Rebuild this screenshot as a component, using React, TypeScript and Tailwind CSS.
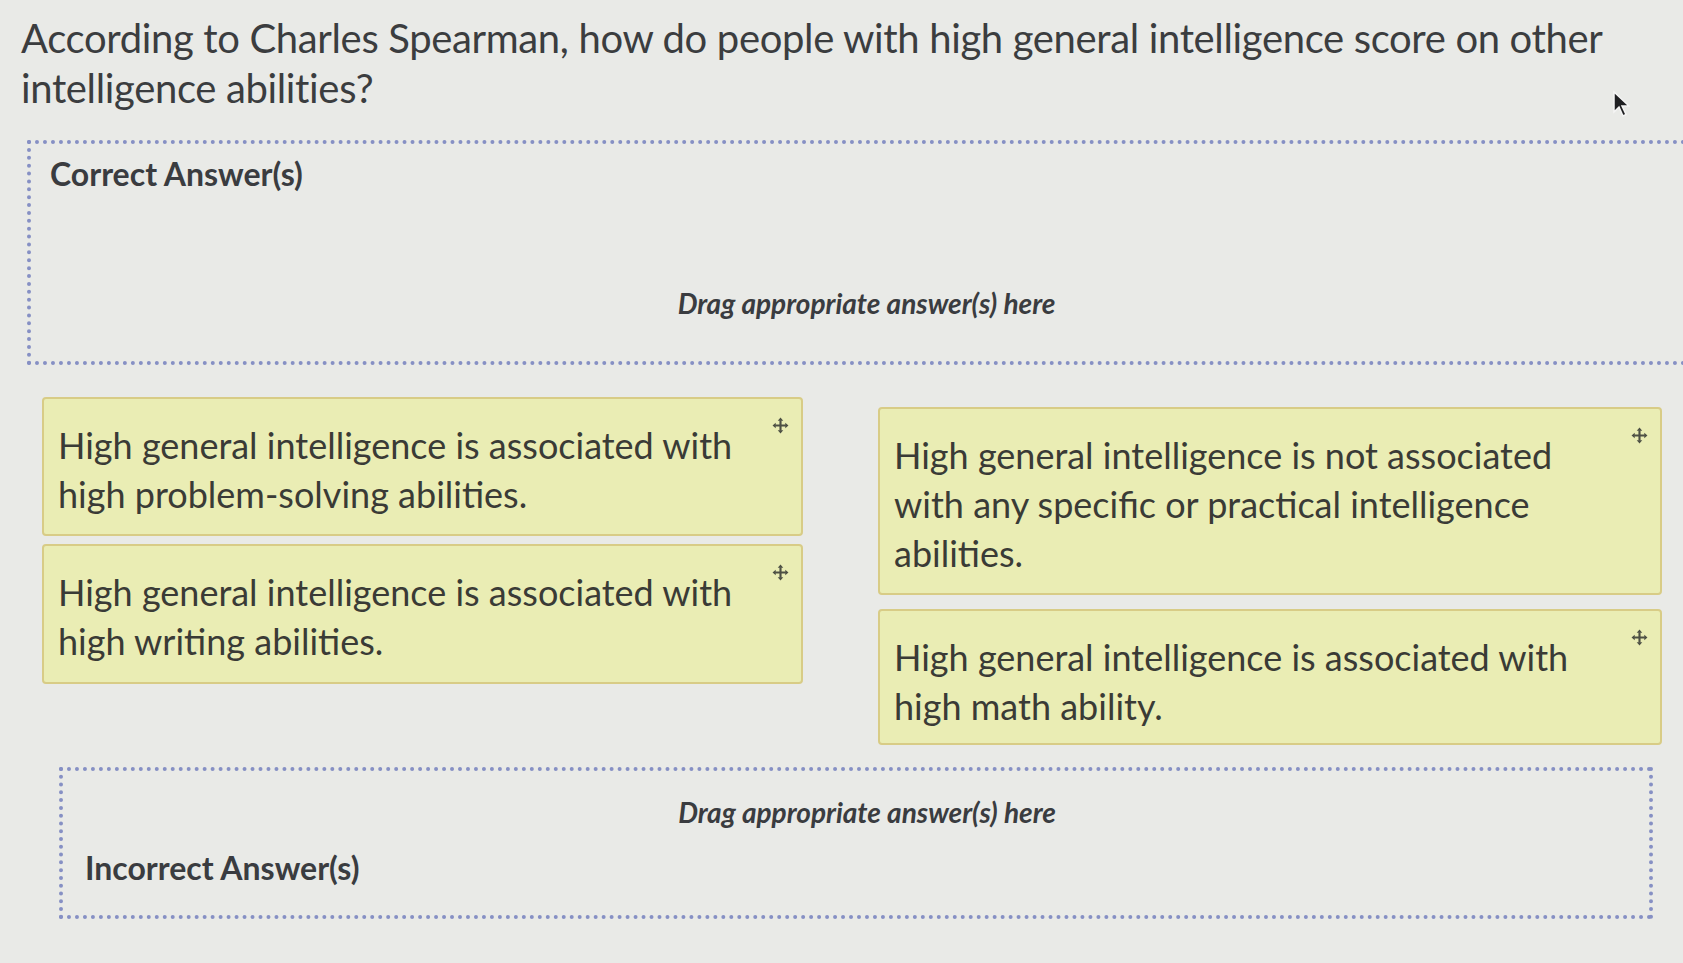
import React from 'react';

interface Answer {
  text: string;
  height: string;
}

const leftAnswers: Answer[] = [
  { text: 'High general intelligence is associated with high problem-solving abilities.', height: 'h-[139px]' },
  { text: 'High general intelligence is associated with high writing abilities.', height: 'h-[140px]' },
];

const rightAnswers: Answer[] = [
  { text: 'High general intelligence is not associated with any specific or practical intelligence abilities.', height: 'h-[188px]' },
  { text: 'High general intelligence is associated with high math ability.', height: 'h-[136px]' },
];

function MoveIcon() {
  return (
    <svg width="17" height="17" viewBox="0 0 16 16" className="text-[#4d5044]">
      <path d="M8 3v10M3 8h10" stroke="currentColor" strokeWidth="2" />
      <path d="M8 0.5l-2.6 3h5.2zM8 15.5l-2.6-3h5.2zM0.5 8l3-2.6v5.2zM15.5 8l-3-2.6v5.2z" fill="currentColor" />
    </svg>
  );
}

function AnswerCard({ answer }: { answer: Answer }) {
  return (
    <div
      className={`relative ${answer.height} rounded-[4px] border-2 border-[#d8cc86] bg-[#eaedb4] pl-[14px] pt-[22px] text-[36px] leading-[49px] text-[#3a3b36]`}
    >
      <div className="w-[690px]">{answer.text}</div>
      <div className="absolute right-[12px] top-[18px]">
        <MoveIcon />
      </div>
    </div>
  );
}

export default function App() {
  return (
    <div className="relative h-[963px] w-[1683px] overflow-hidden bg-[#e9eae7] font-['Lato',sans-serif] text-[#3b3d3f]">
      {/* Question */}
      <div className="pl-[21px] pt-[13px] text-[40px] leading-[50px] tracking-[-0.35px]">
        According to Charles Spearman, how do people with high general intelligence score on other
        <br />
        intelligence abilities?
      </div>

      {/* Correct drop zone */}
      <div className="ml-[27px] mr-[-4px] mt-[27px] h-[225px] border-[4px] border-dotted border-[#8690c4] pl-[19px]">
        <div className="pt-[11px] text-[32px] font-bold leading-[38px] text-[#3a3c40]">
          Correct Answer(s)
        </div>
        <div className="mt-[92px] text-center text-[28px] font-bold italic leading-[36px] text-[#3a3c40]">
          Drag appropriate answer(s) here
        </div>
      </div>

      {/* Answer choices */}
      <div className="mt-[32px] flex gap-[75px] pl-[42px] pr-[21px]">
        <div className="flex w-[761px] flex-col gap-[8px]">
          {leftAnswers.map((a, i) => (
            <AnswerCard key={i} answer={a} />
          ))}
        </div>
        <div className="mt-[10px] flex flex-1 flex-col gap-[14px]">
          {rightAnswers.map((a, i) => (
            <AnswerCard key={i} answer={a} />
          ))}
        </div>
      </div>

      {/* Incorrect drop zone */}
      <div className="ml-[59px] mr-[30px] mt-[22px] h-[152px] border-[4px] border-dotted border-[#8690c4] pl-[22px]">
        <div className="pt-[23px] text-center text-[28px] font-bold italic leading-[36px] text-[#3a3c40]">
          Drag appropriate answer(s) here
        </div>
        <div className="mt-[19px] text-[32px] font-bold leading-[38px] text-[#3a3c40]">
          Incorrect Answer(s)
        </div>
      </div>

      {/* Mouse cursor */}
      <svg className="absolute left-[1612px] top-[90px]" width="18" height="28" viewBox="0 0 18 28">
        <path d="M2 2v20l5-5 4 9 3-1.5-4-8.5h7z" fill="#1f2022" stroke="#f5f5f5" strokeWidth="1.5" />
      </svg>
    </div>
  );
}
